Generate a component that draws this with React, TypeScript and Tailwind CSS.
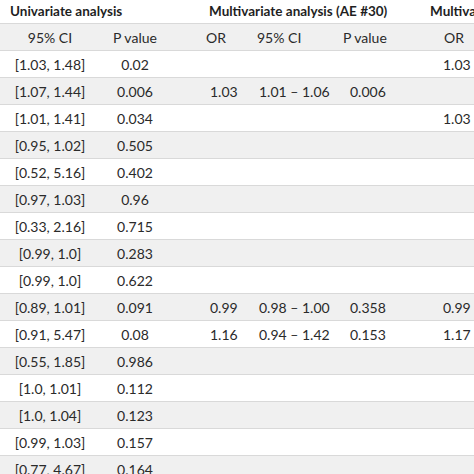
import React from "react";

type Row = { ci: string; p: string; or2?: string; ci2?: string; p2?: string; or3?: string };

const rows: Row[] = [
  { ci: "[1.03, 1.48]", p: "0.02", or3: "1.03" },
  { ci: "[1.07, 1.44]", p: "0.006", or2: "1.03", ci2: "1.01 – 1.06", p2: "0.006" },
  { ci: "[1.01, 1.41]", p: "0.034", or3: "1.03" },
  { ci: "[0.95, 1.02]", p: "0.505" },
  { ci: "[0.52, 5.16]", p: "0.402" },
  { ci: "[0.97, 1.03]", p: "0.96" },
  { ci: "[0.33, 2.16]", p: "0.715" },
  { ci: "[0.99, 1.0]", p: "0.283" },
  { ci: "[0.99, 1.0]", p: "0.622" },
  { ci: "[0.89, 1.01]", p: "0.091", or2: "0.99", ci2: "0.98 – 1.00", p2: "0.358", or3: "0.99" },
  { ci: "[0.91, 5.47]", p: "0.08", or2: "1.16", ci2: "0.94 – 1.42", p2: "0.153", or3: "1.17" },
  { ci: "[0.55, 1.85]", p: "0.986" },
  { ci: "[1.0, 1.01]", p: "0.112" },
  { ci: "[1.0, 1.04]", p: "0.123" },
  { ci: "[0.99, 1.03]", p: "0.157" },
  { ci: "[0.77, 4.67]", p: "0.164" },
];

export default function App() {
  return (
    <div
      className="w-[474px] h-[474px] overflow-hidden bg-white text-[#2a2a2a] text-[14px]"
      style={{ fontFamily: "Lato, 'Open Sans', sans-serif" }}
    >
      <div className="h-[23px] flex items-center font-bold text-[13.5px] text-[#1f1f1f] whitespace-nowrap overflow-hidden">
        <div className="w-[209px] shrink-0 pl-[10px]">Univariate analysis</div>
        <div className="w-[221px] shrink-0">Multivariate analysis (AE #30)</div>
        <div className="shrink-0">Multivariate</div>
      </div>
      <div className="h-[27px] border-t border-[#d9d9d9] bg-[#f0f0f0] grid grid-cols-[100px_70px_80px_85px_85px_54px] items-center whitespace-nowrap">
        <div className="text-center">95% CI</div>
        <div className="text-center">P value</div>
        <div className="pl-[36px]">OR</div>
        <div className="pl-[7px]">95% CI</div>
        <div className="pl-[8px]">P value</div>
        <div className="pl-[24px]">OR</div>
      </div>
      {rows.map((r, i) => (
        <div
          key={i}
          className={`h-[27px] border-t border-[#d9d9d9] grid grid-cols-[100px_70px_80px_85px_85px_54px] items-center whitespace-nowrap ${
            i % 2 === 1 ? "bg-[#f0f0f0]" : "bg-white"
          }`}
        >
          <div className="text-center">{r.ci}</div>
          <div className="text-center">{r.p}</div>
          <div className="pl-[40px]">{r.or2 ?? ""}</div>
          <div className="pl-[9px]">{r.ci2 ?? ""}</div>
          <div className="pl-[15px]">{r.p2 ?? ""}</div>
          <div className="pl-[23px]">{r.or3 ?? ""}</div>
        </div>
      ))}
    </div>
  );
}
